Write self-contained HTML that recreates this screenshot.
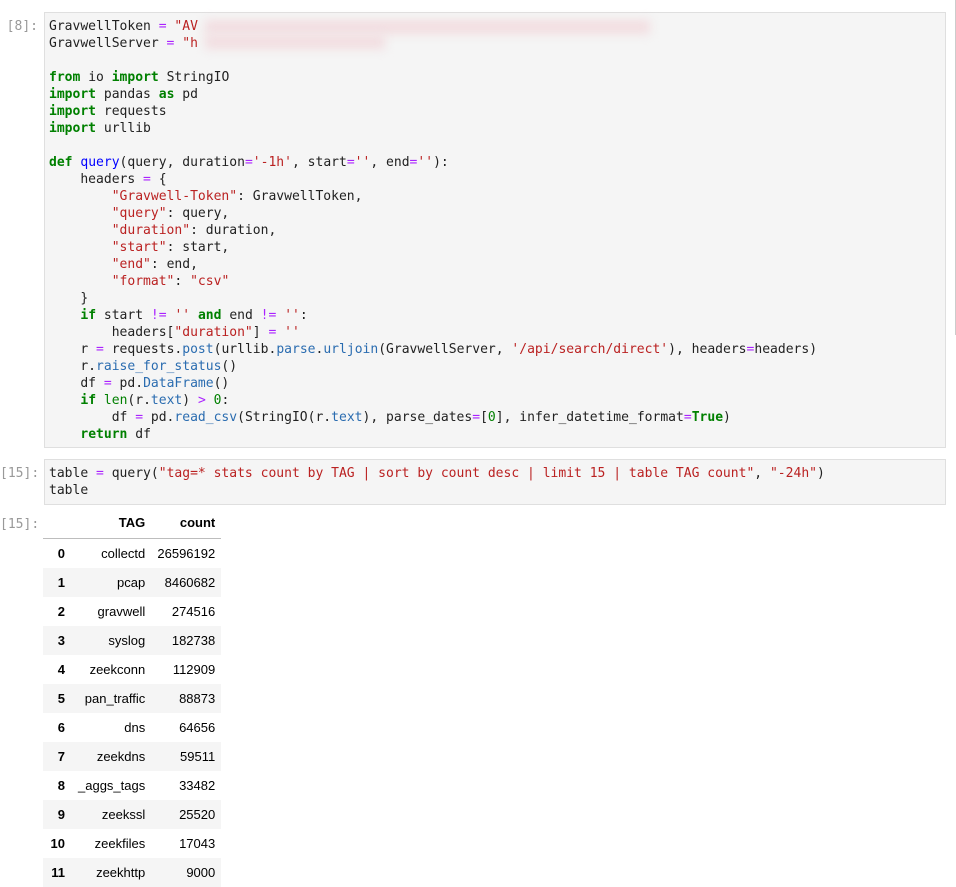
<!DOCTYPE html>
<html><head><meta charset="utf-8"><style>
body{margin:0;width:956px;height:862px;overflow:hidden;background:#fff;position:relative;font-family:"Liberation Sans",sans-serif}
.prompt{position:absolute;left:0;width:38px;text-align:right;font:13.03px/17px "DejaVu Sans Mono",monospace;color:#999}
.cell{position:absolute;left:44px;width:900px;background:#f5f5f5;border:1px solid #dfdfdf}
pre{margin:0;padding:5px 4px;font:13.03px/17px "DejaVu Sans Mono",monospace;color:#212121;white-space:pre}
.k{color:#008000;font-weight:bold}.s{color:#BA2121}.o{color:#AA22FF}.f{color:#0000FF}.n{color:#008000}.a{color:#2a6cb0}
table{position:absolute;left:43px;top:507px;border-collapse:collapse;font-size:13px;color:#000}
td,th{height:29px;padding:0 6px 0 6px;text-align:right;line-height:29px}
th{font-weight:bold}
thead th{border-bottom:1px solid #bdbdbd;height:31px}
tbody tr:nth-child(odd){background:#fff}
tbody tr:nth-child(even){background:#f5f5f5}
.c1{width:16px;padding-right:7px;padding-left:6px}.c2{width:67px}.c3{width:58px}
.blur{position:absolute;background:#f2dde0;filter:blur(5px)}
</style></head><body>
<div class="prompt" style="top:18px">[8]:</div>
<div class="cell" style="top:12px;height:434px"><pre>GravwellToken <span class="o">=</span> <span class="s">"AV</span>
GravwellServer <span class="o">=</span> <span class="s">"h</span>

<span class="k">from</span> io <span class="k">import</span> StringIO
<span class="k">import</span> pandas <span class="k">as</span> pd
<span class="k">import</span> requests
<span class="k">import</span> urllib

<span class="k">def</span> <span class="f">query</span>(query, duration<span class="o">=</span><span class="s">'-1h'</span>, start<span class="o">=</span><span class="s">''</span>, end<span class="o">=</span><span class="s">''</span>):
    headers <span class="o">=</span> {
        <span class="s">"Gravwell-Token"</span>: GravwellToken,
        <span class="s">"query"</span>: query,
        <span class="s">"duration"</span>: duration,
        <span class="s">"start"</span>: start,
        <span class="s">"end"</span>: end,
        <span class="s">"format"</span>: <span class="s">"csv"</span>
    }
    <span class="k">if</span> start <span class="o">!=</span> <span class="s">''</span> <span class="k">and</span> end <span class="o">!=</span> <span class="s">''</span>:
        headers[<span class="s">"duration"</span>] <span class="o">=</span> <span class="s">''</span>
    r <span class="o">=</span> requests.<span class="a">post</span>(urllib.<span class="a">parse</span>.<span class="a">urljoin</span>(GravwellServer, <span class="s">'/api/search/direct'</span>), headers<span class="o">=</span>headers)
    r.<span class="a">raise_for_status</span>()
    df <span class="o">=</span> pd.<span class="a">DataFrame</span>()
    <span class="k">if</span> <span class="n">len</span>(r.<span class="a">text</span>) <span class="o">&gt;</span> <span class="n">0</span>:
        df <span class="o">=</span> pd.<span class="a">read_csv</span>(StringIO(r.<span class="a">text</span>), parse_dates<span class="o">=</span>[<span class="n">0</span>], infer_datetime_format<span class="o">=</span><span class="k">True</span>)
    <span class="k">return</span> df</pre></div>
<div class="blur" style="left:205px;top:20px;width:445px;height:14px"></div>
<div class="blur" style="left:205px;top:35px;width:180px;height:14px"></div>
<div class="prompt" style="top:465px">[15]:</div>
<div class="cell" style="top:459px;height:44px"><pre>table <span class="o">=</span> query(<span class="s">"tag=* stats count by TAG | sort by count desc | limit 15 | table TAG count"</span>, <span class="s">"-24h"</span>)
table</pre></div>
<div class="prompt" style="top:516px">[15]:</div>
<table><thead><tr><th class="c1"></th><th class="c2">TAG</th><th class="c3">count</th></tr></thead><tbody>
<tr><th class="c1">0</th><td>collectd</td><td>26596192</td></tr>
<tr><th class="c1">1</th><td>pcap</td><td>8460682</td></tr>
<tr><th class="c1">2</th><td>gravwell</td><td>274516</td></tr>
<tr><th class="c1">3</th><td>syslog</td><td>182738</td></tr>
<tr><th class="c1">4</th><td>zeekconn</td><td>112909</td></tr>
<tr><th class="c1">5</th><td>pan_traffic</td><td>88873</td></tr>
<tr><th class="c1">6</th><td>dns</td><td>64656</td></tr>
<tr><th class="c1">7</th><td>zeekdns</td><td>59511</td></tr>
<tr><th class="c1">8</th><td>_aggs_tags</td><td>33482</td></tr>
<tr><th class="c1">9</th><td>zeekssl</td><td>25520</td></tr>
<tr><th class="c1">10</th><td>zeekfiles</td><td>17043</td></tr>
<tr><th class="c1">11</th><td>zeekhttp</td><td>9000</td></tr>
</tbody></table>
<div style="position:absolute;left:955px;top:0;width:1px;height:335px;background:#ccc"></div>
</body></html>
